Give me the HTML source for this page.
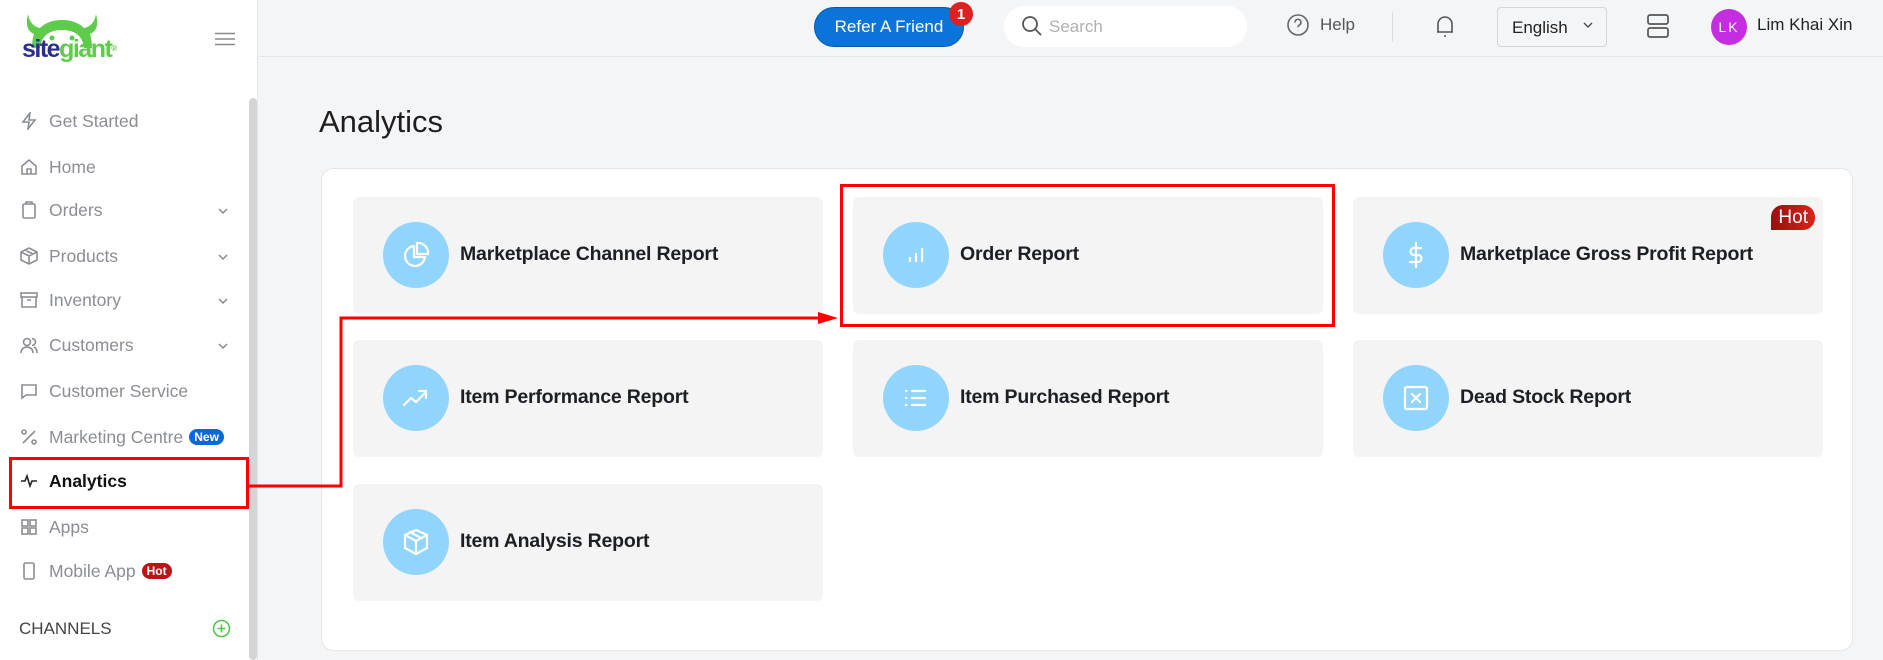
<!DOCTYPE html>
<html><head><meta charset="utf-8"><style>
*{box-sizing:border-box;margin:0;padding:0}
body{width:1883px;height:660px;overflow:hidden;background:#f4f5f7;font-family:"Liberation Sans",sans-serif;position:relative;color:#1a1a1a}
.abs{position:absolute}
.side{left:0;top:0;width:258px;height:660px;background:#fff;border-right:1px solid #e6e6e6}
.scroll{left:249px;top:98px;width:8px;height:562px;background:#d5d5d5;border-radius:4px}
.mi{position:absolute;left:20px;height:30px;display:flex;align-items:center;font-size:17.5px;color:#8a8d93}
.mi svg{width:18px;height:18px;margin-right:11px;stroke:#8a8d93;fill:none;stroke-width:1.6}
.chev{position:absolute;left:217px;width:12px;height:12px}
.top{left:259px;top:0;width:1624px;height:57px;background:#f4f5f7;border-bottom:1px solid #e3e4e6}
.panel{left:321px;top:168px;width:1532px;height:483px;background:#fff;border:1px solid #e6e6e6;border-radius:12px}
.card{position:absolute;width:470px;height:117px;background:#f4f4f4;border-radius:6px}
.circ{position:absolute;left:30px;top:25px;width:66px;height:66px;border-radius:50%;background:#91d5fd;display:flex;align-items:center;justify-content:center}
.circ svg{width:32px;height:32px;stroke:#fff;fill:none;stroke-width:2.2;stroke-linecap:round;stroke-linejoin:round}
.ct{position:absolute;left:107px;top:46px;font-size:19.5px;font-weight:bold;color:#1c1f24;letter-spacing:-0.2px}
.red{position:absolute;border:3px solid #f00}
</style></head><body>
<div class="abs side"></div>
<div class="abs scroll"></div>
<!-- logo -->
<svg class="abs" style="left:26px;top:14px" width="80" height="34" viewBox="0 0 80 34">
<path d="M2 0 Q4 12 14 14 Q22 6 36 6 Q50 6 58 14 Q68 12 70 0 Q74 16 64 20 Q66 26 66 34 L58 34 Q56 16 36 16 Q16 16 14 34 L6 34 Q6 26 8 20 Q-2 16 2 0Z" fill="#5ecb4b"/>
<circle cx="26" cy="24" r="2.5" fill="#5ecb4b"/><circle cx="46" cy="24" r="2.5" fill="#5ecb4b"/>
</svg>
<div class="abs" style="left:22px;top:36px;font-size:25px;font-weight:bold;letter-spacing:-1.5px;line-height:26px"><span style="color:#2c2f8a">site</span><span style="color:#5ecb4b">giant</span><span style="color:#5ecb4b;font-size:8px;vertical-align:top">®</span></div>
<svg class="abs" style="left:215px;top:32px" width="20" height="14"><path d="M0 1.5H20M0 7H20M0 12.5H20" stroke="#888" stroke-width="1.6"/></svg>

<div class="mi" style="top:106px"><svg viewBox="0 0 18 18"><path d="M10 1 3 10h6l-1 7 7-9H9l1-7z"/></svg>Get Started</div>
<div class="mi" style="top:152px"><svg viewBox="0 0 18 18"><path d="M2 8 9 2l7 6v8H2z M7 16v-5h4v5"/></svg>Home</div>
<div class="mi" style="top:195px"><svg viewBox="0 0 18 18"><rect x="3" y="3" width="12" height="14" rx="1.5"/><path d="M6 3V1h6v2"/></svg>Orders</div>
<div class="mi" style="top:241px"><svg viewBox="0 0 18 18"><path d="M9 1 17 5v8l-8 4-8-4V5z M1 5l8 4 8-4 M9 9v8 M5 3l8 4"/></svg>Products</div>
<div class="mi" style="top:285px"><svg viewBox="0 0 18 18"><rect x="1" y="2" width="16" height="4"/><path d="M2 6v10h14V6 M7 9h4"/></svg>Inventory</div>
<div class="mi" style="top:330px"><svg viewBox="0 0 18 18"><circle cx="7" cy="6" r="3.5"/><path d="M1 17c0-4 3-6 6-6s6 2 6 6 M12 2.5a3.5 3.5 0 010 7 M14 11c2 1 3 3 3 6"/></svg>Customers</div>
<div class="mi" style="top:376px"><svg viewBox="0 0 18 18"><path d="M2 3h14v10H6l-4 3z"/></svg>Customer Service</div>
<div class="mi" style="top:422px"><svg viewBox="0 0 18 18"><path d="M15 3 3 15"/><circle cx="4" cy="4" r="2"/><circle cx="14" cy="14" r="2"/></svg>Marketing Centre<span style="margin-left:6px;background:#0b68d8;color:#fff;font-size:12px;font-weight:bold;border-radius:8px;padding:1px 5px">New</span></div>
<div class="mi" style="top:466px;color:#111;font-weight:bold"><svg viewBox="0 0 18 18" style="stroke:#222"><path d="M1 9h4l2-5 3 10 2-5h5"/></svg>Analytics</div>
<div class="mi" style="top:512px"><svg viewBox="0 0 18 18"><rect x="2" y="2" width="6" height="6"/><rect x="10" y="2" width="6" height="6"/><rect x="2" y="10" width="6" height="6"/><rect x="10" y="10" width="6" height="6"/></svg>Apps</div>
<div class="mi" style="top:556px"><svg viewBox="0 0 18 18"><rect x="4" y="1" width="10" height="16" rx="1.5"/><path d="M9 14h.1"/></svg>Mobile App<span style="margin-left:6px;background:#b81616;color:#fff;font-size:12px;font-weight:bold;border-radius:8px;padding:1px 5px">Hot</span></div>
<svg class="chev" style="top:205px" viewBox="0 0 12 12"><path d="M2 4l4 4 4-4" stroke="#888" fill="none" stroke-width="1.5"/></svg>
<svg class="chev" style="top:251px" viewBox="0 0 12 12"><path d="M2 4l4 4 4-4" stroke="#888" fill="none" stroke-width="1.5"/></svg>
<svg class="chev" style="top:295px" viewBox="0 0 12 12"><path d="M2 4l4 4 4-4" stroke="#888" fill="none" stroke-width="1.5"/></svg>
<svg class="chev" style="top:340px" viewBox="0 0 12 12"><path d="M2 4l4 4 4-4" stroke="#888" fill="none" stroke-width="1.5"/></svg>
<div class="abs" style="left:19px;top:619px;font-size:17px;color:#444">CHANNELS</div>
<svg class="abs" style="left:212px;top:619px" width="19" height="19" viewBox="0 0 19 19"><circle cx="9.5" cy="9.5" r="8" stroke="#4cc94c" fill="none" stroke-width="1.6"/><path d="M9.5 5.5v8M5.5 9.5h8" stroke="#4cc94c" stroke-width="1.6"/></svg>

<div class="abs top"></div>
<div class="abs" style="left:814px;top:7px;width:150px;height:40px;border-radius:20px;background:#0a74da;border:1px solid #0559b0;color:#fff;font-size:17px;display:flex;align-items:center;justify-content:center">Refer A Friend</div>
<div class="abs" style="left:949px;top:2px;width:24px;height:24px;border-radius:50%;background:#e02020;color:#fff;font-size:15px;font-weight:bold;display:flex;align-items:center;justify-content:center">1</div>
<div class="abs" style="left:1004px;top:6px;width:243px;height:41px;border-radius:20px;background:#fff"></div>
<svg class="abs" style="left:1021px;top:15px" width="22" height="22" viewBox="0 0 22 22"><circle cx="9" cy="9" r="7" stroke="#555" stroke-width="1.8" fill="none"/><path d="M14 14l6 6" stroke="#555" stroke-width="1.8"/></svg>
<div class="abs" style="left:1049px;top:17px;font-size:17px;color:#b0b0b0">Search</div>
<svg class="abs" style="left:1286px;top:13px" width="24" height="24" viewBox="0 0 24 24"><circle cx="12" cy="12" r="10" stroke="#666" stroke-width="1.6" fill="none"/><path d="M9 9.5a3 3 0 115 2c-1 .8-2 1.2-2 2.8M12 17.5v.3" stroke="#666" stroke-width="1.6" fill="none"/></svg>
<div class="abs" style="left:1320px;top:15px;font-size:17px;color:#555">Help</div>
<div class="abs" style="left:1392px;top:12px;width:1px;height:30px;background:#ddd"></div>
<svg class="abs" style="left:1434px;top:13px" width="22" height="26" viewBox="0 0 22 26"><path d="M4 19V11a7 7 0 0114 0v8H3h16 M10 23h2" stroke="#555" stroke-width="1.6" fill="none"/></svg>
<div class="abs" style="left:1497px;top:7px;width:110px;height:40px;border:1px solid #d6d6d6;border-radius:4px;background:#f4f5f7;font-size:17px;color:#222;padding:10px 0 0 14px">English</div>
<svg class="abs" style="left:1583px;top:22px" width="10" height="8"><path d="M1 1l4 4 4-4" stroke="#444" fill="none" stroke-width="1.3"/></svg>
<svg class="abs" style="left:1646px;top:13px" width="24" height="26" viewBox="0 0 24 26"><rect x="2" y="2" width="20" height="9" rx="2" stroke="#555" stroke-width="1.7" fill="none"/><rect x="2" y="15" width="20" height="9" rx="2" stroke="#555" stroke-width="1.7" fill="none"/></svg>
<div class="abs" style="left:1711px;top:9px;width:36px;height:36px;border-radius:50%;background:#c42ee0;color:#fff;font-size:14px;display:flex;align-items:center;justify-content:center;letter-spacing:2px">LK</div>
<div class="abs" style="left:1757px;top:15px;font-size:17px;color:#222">Lim Khai Xin</div>

<div class="abs" style="left:319px;top:104px;font-size:31px;color:#1e1e1e">Analytics</div>
<div class="abs panel"></div>

<div class="card" style="left:353px;top:197px"><div class="circ"><svg viewBox="0 0 32 32"><path d="M14 7a10 10 0 1011 11H14z"/><path d="M17 4a10 10 0 0111 11H17z"/></svg></div><div class="ct">Marketplace Channel Report</div></div>
<div class="card" style="left:853px;top:197px"><div class="circ"><svg viewBox="0 0 32 32"><path d="M10 22v-3M16 22v-7M22 22V10"/></svg></div><div class="ct">Order Report</div></div>
<div class="card" style="left:1353px;top:197px"><div class="circ"><svg viewBox="0 0 32 32"><path d="M16 4v24M21 9h-7a3.5 3.5 0 000 7h4a3.5 3.5 0 010 7h-8"/></svg></div><div class="ct">Marketplace Gross Profit Report</div>
<div style="position:absolute;right:8px;top:8px;background:linear-gradient(90deg,#9b0f0f,#d8241a);color:#fff;font-size:19px;padding:0 7px;height:25px;line-height:25px;border-radius:12px 12px 12px 0">Hot</div></div>

<div class="card" style="left:353px;top:340px"><div class="circ"><svg viewBox="0 0 32 32"><path d="M4 23l7-7 5 4 10-10M19 9h7v7"/></svg></div><div class="ct">Item Performance Report</div></div>
<div class="card" style="left:853px;top:340px"><div class="circ"><svg viewBox="0 0 32 32"><path d="M12 9h13M12 16h13M12 23h13M6 9h.5M6 16h.5M6 23h.5"/></svg></div><div class="ct">Item Purchased Report</div></div>
<div class="card" style="left:1353px;top:340px"><div class="circ"><svg viewBox="0 0 32 32"><rect x="5" y="5" width="22" height="22" rx="2"/><path d="M12 12l8 8M20 12l-8 8"/></svg></div><div class="ct">Dead Stock Report</div></div>

<div class="card" style="left:353px;top:484px"><div class="circ"><svg viewBox="0 0 32 32"><path d="M16 4l11 5v13l-11 6-11-6V9z M5 9l11 6 11-6 M16 15v13 M10 6l11 6"/></svg></div><div class="ct">Item Analysis Report</div></div>

<div class="red" style="left:840px;top:184px;width:495px;height:143px"></div>
<div class="red" style="left:9px;top:457px;width:240px;height:52px"></div>
<svg class="abs" style="left:0;top:0" width="1883" height="660"><path d="M248 486H341V318H820" stroke="#f00" stroke-width="3" fill="none"/><path d="M818 312 838 318 818 324z" fill="#f00"/></svg>
</body></html>
